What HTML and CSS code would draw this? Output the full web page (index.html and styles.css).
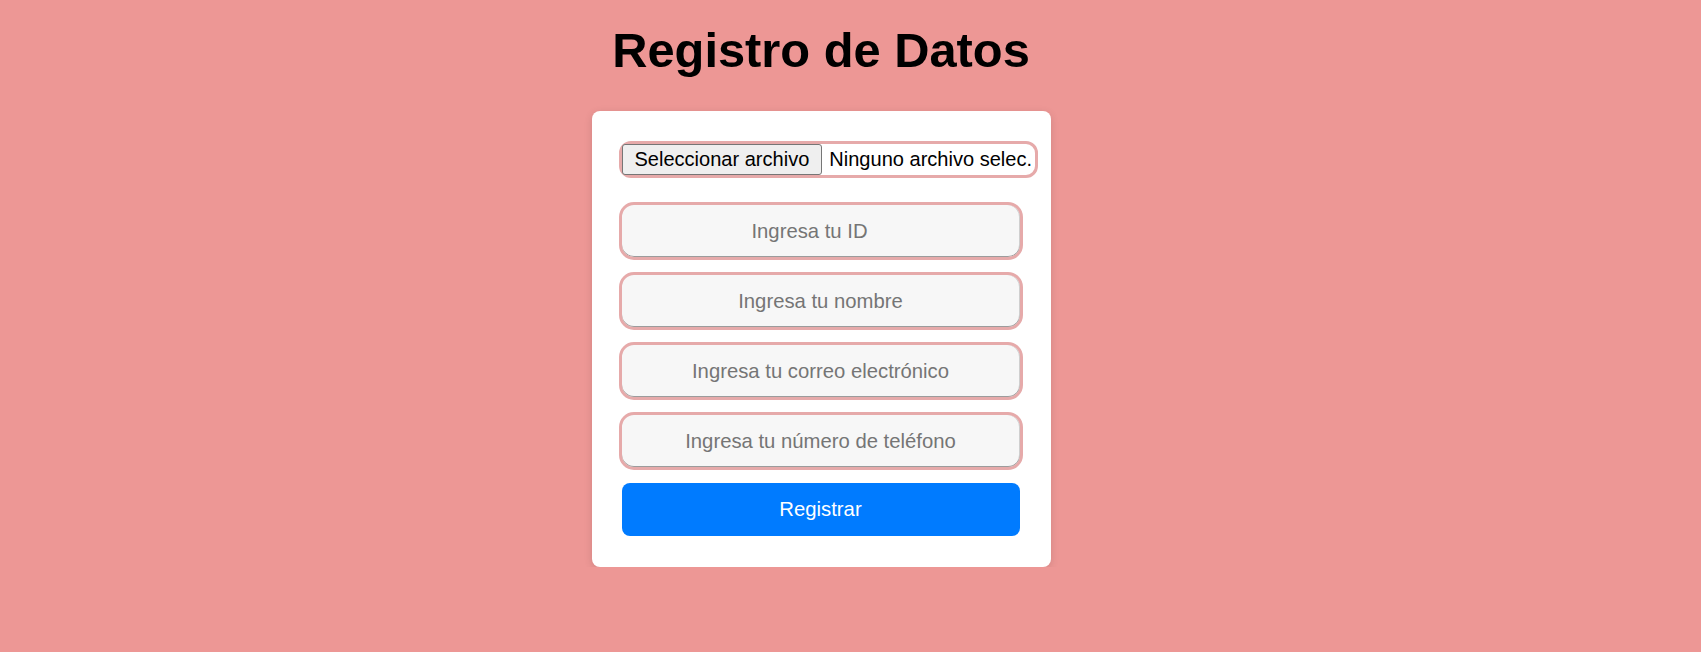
FILE: index.html
```html
<!DOCTYPE html>
<html lang="es">
<head>
<meta charset="utf-8">
<title>Registro de Datos</title>
<link rel="stylesheet" href="styles.css">
</head>
<body>
<main class="page">
  <h1 class="title">Registro de Datos</h1>
  <form class="card">
    <label class="file">
      <span class="file-btn">Seleccionar archivo</span>
      <span class="file-name">Ninguno archivo selec.</span>
    </label>
    <div class="fields">
      <input class="field field-number" type="number" placeholder="Ingresa tu ID">
      <input class="field" type="text" placeholder="Ingresa tu nombre">
      <input class="field" type="email" placeholder="Ingresa tu correo electrónico">
      <input class="field" type="tel" placeholder="Ingresa tu número de teléfono">
    </div>
    <button class="submit" type="button">Registrar</button>
  </form>
</main>
</body>
</html>
```

FILE: styles.css
```css
html, body {
  margin: 0;
  padding: 0;
  background: #ed9795;
  font-family: "Liberation Sans", Arial, sans-serif;
}

.page {
  display: flex;
  flex-direction: column;
  align-items: center;
  padding-right: 59px;
}

.title {
  margin: 23px 0 34px;
  font-size: 48.8px;
  line-height: 54px;
  font-weight: bold;
  color: #000;
}

.card {
  box-sizing: border-box;
  width: 459px;
  background: #fff;
  border-radius: 8px;
  padding: 30px 28px 31px 27px;
  box-shadow: 0 2px 8px rgba(0, 0, 0, 0.12);
  display: flex;
  flex-direction: column;
  align-items: flex-start;
}

.file {
  display: inline-flex;
  align-items: center;
  gap: 7px;
  border: 3px solid #e6aaaa;
  border-radius: 12px;
  padding-right: 3px;
  font-size: 20.05px;
  color: #000;
  white-space: nowrap;
}

.file-btn {
  box-sizing: border-box;
  height: 31px;
  display: inline-flex;
  align-items: center;
  padding: 0 12px;
  background: #efefef;
  border: 1px solid #767676;
  border-radius: 3px;
}

.fields {
  margin-top: 24px;
  align-self: stretch;
  display: flex;
  flex-direction: column;
  gap: 12px;
}

.field {
  box-sizing: border-box;
  width: 100%;
  height: 58px;
  margin: 0;
  border: 3px solid #e6aaaa;
  border-radius: 15px;
  background: #f7f7f7;
  box-shadow: inset 0 -1px 0 #9c9c9c, inset -1px 0 0 #cfcfcf;
  font-family: "Liberation Sans", Arial, sans-serif;
  font-size: 20.3px;
  text-align: center;
  color: #333;
  outline: none;
}

.field-number {
  padding-right: 24px;
}

.field-number::-webkit-inner-spin-button,
.field-number::-webkit-outer-spin-button {
  -webkit-appearance: none;
  margin: 0;
}

.field::placeholder {
  color: #757575;
}

.submit {
  align-self: stretch;
  margin: 13px 3px 0;
  height: 53px;
  border: none;
  border-radius: 8px;
  background: #007bff;
  color: #fff;
  font-family: "Liberation Sans", Arial, sans-serif;
  font-size: 20.3px;
  cursor: pointer;
}
```
